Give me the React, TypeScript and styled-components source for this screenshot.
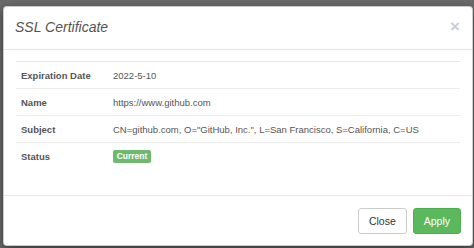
import React from "react"
import styled, { createGlobalStyle } from "styled-components"

const GlobalStyle = createGlobalStyle`
	html, body {
		margin: 0;
		padding: 0;
		background: #6a6a6a;
	}
	* {
		box-sizing: border-box;
	}
`

interface CertRow {
	label: string
	value: string
	badge?: boolean
}

const rows: CertRow[] = [
	{ label: "Expiration Date", value: "2022-5-10" },
	{ label: "Name", value: "https://www.github.com" },
	{ label: "Subject", value: 'CN=github.com, O="GitHub, Inc.", L=San Francisco, S=California, C=US' },
	{ label: "Status", value: "Current", badge: true },
]

export default function App() {
	return (
		<>
			<GlobalStyle />
			<Backdrop>
				<Modal>
					<Header>
						<Title>SSL Certificate</Title>
						<CloseX aria-label="Close">×</CloseX>
					</Header>
					<Body>
						<Table>
							<tbody>
								{rows.map(row => (
									<tr key={row.label}>
										<Label>{row.label}</Label>
										<Value>{row.badge ? <Badge>{row.value}</Badge> : row.value}</Value>
									</tr>
								))}
							</tbody>
						</Table>
					</Body>
					<Footer>
						<Button>Close</Button>
						<Button primary>Apply</Button>
					</Footer>
				</Modal>
			</Backdrop>
		</>
	)
}

const Backdrop = styled.div`
	width: 474px;
	height: 248px;
	overflow: hidden;
	padding: 6px 0 0 3px;
	font-family: "Liberation Sans", Arial, sans-serif;
`

const Modal = styled.div`
	width: 470px;
	height: 240px;
	background: #fff;
	border: 1px solid rgba(0, 0, 0, 0.2);
	border-radius: 4px;
	box-shadow: 0 3px 9px rgba(0, 0, 0, 0.5);
	display: flex;
	flex-direction: column;
`

const Header = styled.div`
	height: 43px;
	display: flex;
	align-items: center;
	justify-content: space-between;
	padding: 0 12px 2px 11px;
	border-bottom: 1px solid #e5e5e5;
`

const Title = styled.h4`
	margin: 0;
	font-size: 14px;
	font-style: italic;
	font-weight: normal;
	color: #555;
`

const CloseX = styled.span`
	font-size: 17px;
	font-weight: bold;
	line-height: 1;
	color: #000;
	opacity: 0.2;
	margin-top: -2px;
`

const Body = styled.div`
	flex: 1;
	padding: 11px 12px 0 12px;
`

const Table = styled.table`
	width: 100%;
	border-collapse: collapse;
	font-size: 9.5px;
	color: #555;

	tr:first-child td {
		border-top: 1px solid #e8e8e8;
	}
`

const Label = styled.td`
	width: 92px;
	height: 27px;
	padding: 0 5px;
	font-weight: bold;
	border-top: 1px solid #ececec;
	vertical-align: middle;
`

const Value = styled.td`
	padding: 0 5px;
	border-top: 1px solid #ececec;
	vertical-align: middle;
`

const Badge = styled.span`
	display: inline-block;
	width: 38px;
	height: 13px;
	line-height: 13px;
	text-align: center;
	font-size: 8.5px;
	font-weight: bold;
	color: #fff;
	background: #6fb96f;
	border-radius: 2px;
`

const Footer = styled.div`
	height: 50px;
	border-top: 1px solid #e5e5e5;
	display: flex;
	justify-content: flex-end;
	align-items: flex-start;
	gap: 6px;
	padding: 12px 11px 0 0;
`

const Button = styled.button<{ primary?: boolean }>`
	height: 26px;
	padding: 0 10px;
	font-family: "Liberation Sans", Arial, sans-serif;
	font-size: 10.5px;
	border-radius: 3px;
	border: 1px solid ${props => (props.primary ? "#4cae4c" : "#ccc")};
	background: ${props => (props.primary ? "#5cb85c" : "#fff")};
	color: ${props => (props.primary ? "#fff" : "#333")};
`
